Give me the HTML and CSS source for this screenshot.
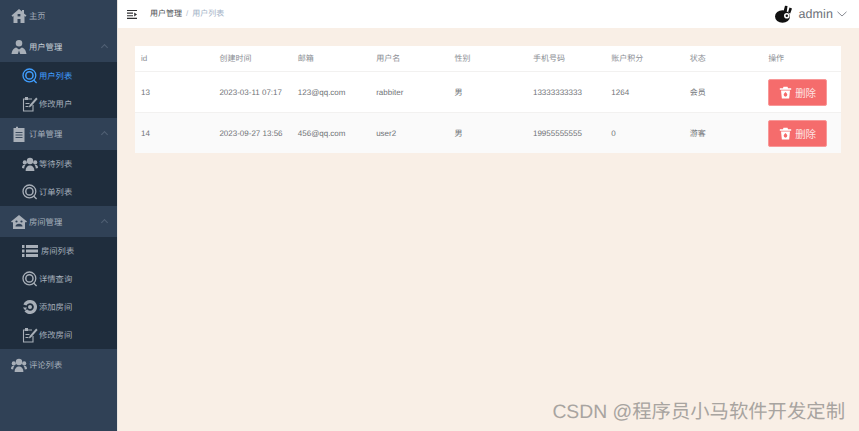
FILE: index.html
```html
<!DOCTYPE html>
<html lang="zh-CN">
<head>
<meta charset="utf-8">
<title>用户列表</title>
<link rel="stylesheet" href="styles.css">
</head>
<body>
<svg class="defs" width="0" height="0" aria-hidden="true">
  <symbol id="i-home" viewBox="0 0 16 16"><path d="M8 1 0.500 7.600 1.600 8.800 2.500 8V15H6.500V11H9.500V15H13.500V8L14.400 8.800 15.500 7.600 13 5.400V2H11V3.600Z"/><rect x="6.600" y="6" width="2.800" height="2.400" fill="#304156"/></symbol>
  <symbol id="i-user" viewBox="0 0 16 16"><path d="M8 1a3.300 3.300 0 1 1 0 6.600A3.300 3.300 0 0 1 8 1Z"/><path d="M5.200 8.400 8 10.600l2.800-2.200C13 9 15 10.800 15.500 15H9.200L8 11.600 6.800 15H.5C1 10.800 3 9 5.200 8.400Z"/></symbol>
  <symbol id="i-search" viewBox="0 0 16 16"><circle cx="7.400" cy="7.400" r="6.400" fill="none" stroke="currentColor" stroke-width="1.300"/><circle cx="7.400" cy="7.400" r="3.600" fill="none" stroke="currentColor" stroke-width="1.500"/><path d="m11.600 12 3 3" fill="none" stroke="currentColor" stroke-width="1.300"/></symbol>
  <symbol id="i-edit" viewBox="0 0 16 16"><path d="M10 3H1.500V15H11V9" fill="none" stroke="currentColor" stroke-width="1.100"/><path d="M3 1h3v3H3zM3.500 7h4v1h-4zM3.500 10h3v1h-3z"/><path d="M14.200 1.500 15.600 3 9 10.400 6.800 11.400 7.600 9Z"/></symbol>
  <symbol id="i-doc" viewBox="0 0 16 16"><path d="M2.500 2H5V.8H7V2h6.500v14h-11Z"/><path d="M4.500 6.500h7M4.500 9h7M4.500 11.500h7" stroke="#304156" stroke-width=".9" fill="none"/></symbol>
  <symbol id="i-group" viewBox="0 0 16 16"><circle cx="8" cy="5" r="3.200"/><circle cx="2.800" cy="6.400" r="2.100"/><circle cx="13.200" cy="6.400" r="2.100"/><path d="M3.600 15c0-3.800 2-5.600 4.400-5.600s4.400 1.800 4.400 5.600Z"/><path d="M0 12c0-2 1-3.200 2.800-3.200l.6.2C2.600 10 2.300 11 2.200 12.600ZM16 12c0-2-1-3.200-2.800-3.200l-.6.2c.8 1 1.100 2 1.200 3.600Z"/></symbol>
  <symbol id="i-room" viewBox="0 0 16 16"><path d="M8 1 0 7.400 1 8.600 2 8V15H14V8L15 8.600 16 7.400Z"/><circle cx="5.500" cy="7.500" r="1.100" fill="#304156"/><circle cx="10.500" cy="7.500" r="1.100" fill="#304156"/><path d="M4.500 12.500c0-2 1.500-2.800 3.500-2.800s3.500.8 3.500 2.800Z" fill="#304156"/></symbol>
  <symbol id="i-list" viewBox="0 0 16 16"><path d="M4 2h12v3H4zM4 6.500h12v3H4zM4 11h12v3H4zM0 2h2.500v3H0zM0 6.500h2.500v3H0zM0 11h2.500v3H0z"/></symbol>
  <symbol id="i-add" viewBox="0 0 16 16"><path d="M8 1a7 7 0 1 1-5.500 11.300L5 10.300A3.800 3.800 0 1 0 4.500 6.600L1.400 5.600A7 7 0 0 1 8 1Z"/><circle cx="8" cy="8" r="2"/><path d="M.9 8.500H5L3.300 11.500Z"/></symbol>
  <symbol id="i-trash" viewBox="0 0 16 16"><path d="M5.500 1h5l.6 1.700H15v1.800H1V2.700h3.900Z"/><path d="M2.500 5.500h11L12.500 15.500h-9ZM8 7.500c-1.300 1.200-2.200 2.200-2.200 3.400a2.200 2.200 0 0 0 4.400 0C10.200 9.700 9.300 8.700 8 7.500Z" fill-rule="evenodd"/></symbol>
</svg>
<div class="app">
  <aside class="sidebar">
    <nav class="menu">
      <a class="top"><svg class="ico"><use href="#i-home"/></svg><span>主页</span></a>
      <a class="top open"><svg class="ico"><use href="#i-user"/></svg><span class="strong">用户管理</span><i class="up"></i></a>
      <div class="sub">
        <a class="item active"><svg class="ico"><use href="#i-search"/></svg><span>用户列表</span></a>
        <a class="item"><svg class="ico"><use href="#i-edit"/></svg><span>修改用户</span></a>
      </div>
      <a class="top open tall"><svg class="ico"><use href="#i-doc"/></svg><span>订单管理</span><i class="up"></i></a>
      <div class="sub">
        <a class="item"><svg class="ico"><use href="#i-group"/></svg><span>等待列表</span></a>
        <a class="item"><svg class="ico"><use href="#i-search"/></svg><span>订单列表</span></a>
      </div>
      <a class="top open"><svg class="ico"><use href="#i-room"/></svg><span>房间管理</span><i class="up"></i></a>
      <div class="sub">
        <a class="item"><svg class="ico"><use href="#i-list"/></svg><span class="wide">房间列表</span></a>
        <a class="item"><svg class="ico"><use href="#i-search"/></svg><span>详情查询</span></a>
        <a class="item"><svg class="ico"><use href="#i-add"/></svg><span>添加房间</span></a>
        <a class="item"><svg class="ico"><use href="#i-edit"/></svg><span>修改房间</span></a>
      </div>
      <a class="top"><svg class="ico"><use href="#i-group"/></svg><span>评论列表</span></a>
    </nav>
  </aside>
  <div class="main">
    <header class="navbar">
      <svg class="fold" viewBox="0 0 10 9"><path d="M0 0h10v1.100H0zM0 2.600h6v1.100H0zM0 5.200h6v1.100H0zM0 7.800h10v1.100H0zM7.200 2.400 10 4.400 7.200 6.400Z"/></svg>
      <div class="crumb"><b>用户管理</b><em>/</em><span>用户列表</span></div>
      <div class="account">
        <svg class="avatar" viewBox="0 0 18 18"><ellipse cx="7.500" cy="11.500" rx="7.500" ry="6.200"/><path d="M8.500 6.500 10 .8 12.500 1 11.800 6.500ZM13 7.500 14.500 2.500 17 3.500 15.200 8.500Z"/><circle cx="11.800" cy="10.800" r="2.800" fill="#fff"/><circle cx="11.800" cy="10.800" r="1.200"/></svg>
        <span class="name">admin</span>
        <svg class="caret" viewBox="0 0 10 6"><path d="M.5.8 5 5 9.500.8" fill="none" stroke="currentColor" stroke-width=".9"/></svg>
      </div>
    </header>
    <main class="content">
      <div class="card">
        <div class="row head">
          <div>id</div><div>创建时间</div><div>邮箱</div><div>用户名</div><div>性别</div><div>手机号码</div><div>账户积分</div><div>状态</div><div>操作</div>
        </div>
        <div class="row">
          <div>13</div><div>2023-03-11 07:17</div><div>123@qq.com</div><div>rabbiter</div><div>男</div><div>13333333333</div><div>1264</div><div>会员</div>
          <div><button class="del"><svg><use href="#i-trash"/></svg>删除</button></div>
        </div>
        <div class="row alt">
          <div>14</div><div>2023-09-27 13:56</div><div>456@qq.com</div><div>user2</div><div>男</div><div>19955555555</div><div>0</div><div>游客</div>
          <div><button class="del"><svg><use href="#i-trash"/></svg>删除</button></div>
        </div>
      </div>
    </main>
  </div>
</div>
<div class="mark">CSDN @程序员小马软件开发定制</div>
</body>
</html>
```
FILE: styles.css
```css
* { box-sizing: border-box; }
html, body { margin: 0; height: 100%; overflow: hidden; }
body { font-family: "Liberation Sans", "Noto Sans CJK SC", sans-serif; background: #f9efe6; text-rendering: geometricPrecision; }
.defs { position: absolute; }
.app { display: flex; height: 431px; }

.sidebar { width: 118px; flex: none; background: #304156; border-right: 1px solid #e8e4df; }
.menu { display: flex; flex-direction: column; }
.menu a { display: flex; align-items: center; color: #a4aeba; font-size: 8.300px; }
.top { height: 31px; padding-left: 11px; gap: 2px; position: relative; }
.top.tall { height: 32px; }
.top .ico { width: 16px; height: 16px; fill: #a8afb8; color: #a8afb8; flex: none; }
.top .strong { color: #c4ccd4; }
.up { position: absolute; right: 10px; top: 14px; width: 5px; height: 5px; border-left: 1px solid #506075; border-top: 1px solid #506075; transform: rotate(45deg); }
.sub { background: #1f2d3d; display: flex; flex-direction: column; }
.item { height: 28px; padding-left: 22px; gap: 1px; }
.item .ico { width: 16px; height: 16px; fill: #a8afb8; color: #a8afb8; flex: none; }
.item .wide { margin-left: 2px; }
.item.active { color: #409eff; }
.item.active .ico { fill: #409eff; color: #409eff; }

.main { flex: 1; min-width: 0; display: flex; flex-direction: column; }
.navbar { height: 28px; flex: none; background: #fff; display: flex; align-items: center; padding: 0 12px 0 9px; }
.fold { width: 10px; height: 9px; fill: #303133; flex: none; }
.crumb { margin-left: 13px; font-size: 8px; line-height: 10px; color: #a3b2c6; display: flex; align-items: center; gap: 4px; }
.crumb b { font-weight: 400; color: #4a4d52; }
.crumb em { font-style: normal; color: #b4bccc; }
.account { margin-left: auto; display: flex; align-items: center; color: #6e727a; }
.avatar { width: 18px; height: 18px; fill: #111; }
.name { font-size: 12.500px; margin-left: 5px; letter-spacing: .1px; }
.caret { width: 10px; height: 6px; margin-left: 4px; color: #7a7e86; }

.content { flex: 1; padding: 18px 18px 0 17px; }
.card { background: #fff; width: 706px; font-size: 8px; color: #707377; }
.row { display: grid; grid-template-columns: repeat(9, 78.400px); align-items: center; height: 41px; border-bottom: 1px solid #f2f1f0; }
.row > div { padding-left: 6px; }
.row.head { height: 26px; color: #8a8d93; }
.row.alt { height: 40px; background: #fafafa; border-bottom: 0; }
.del { display: flex; align-items: center; justify-content: center; gap: 3px; width: 59px; height: 27px; padding: 0; border: 1px solid #f89898; border-radius: 2px; background: #f56c6c; color: #fde2e2; font: 10.500px "Liberation Sans", "Noto Sans CJK SC", sans-serif; }
.del svg { width: 13px; height: 13px; fill: #fff; }

.mark { position: absolute; right: 14px; top: 400px; font-size: 19.350px; line-height: 24px; color: #a8a4a0; white-space: nowrap; }
```
